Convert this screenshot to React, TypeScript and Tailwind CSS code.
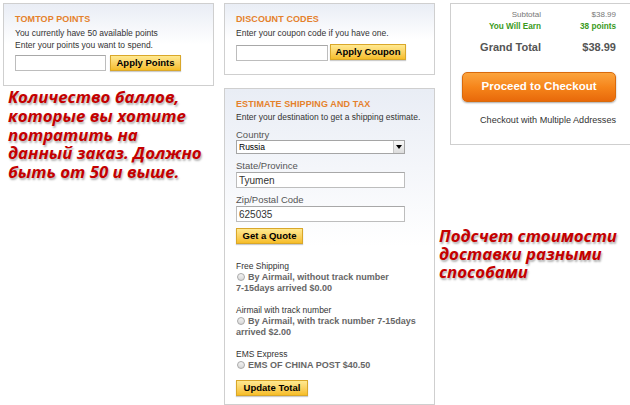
import React from "react";

const panel =
  "border border-[#cfcfcf] bg-gradient-to-b from-[#e9edf5] via-white to-white";
const title = "text-[9px] leading-[12px] font-bold text-[#e5812c] tracking-[0.1px]";
const body = "text-[8.5px] leading-[12px] text-[#333] whitespace-nowrap";
const yellowBtn =
  "h-[16px] flex items-center justify-center border border-[#d9a72a] bg-gradient-to-b from-[#ffe98f] to-[#f6bd22] text-[9.5px] font-bold text-black shadow-[0_1px_1px_rgba(0,0,0,0.2)] whitespace-nowrap";
const input = "h-[16px] border border-[#bdbdbd] border-t-[#a8a8a8] bg-white";
const red =
  "text-[#c40000] font-bold italic text-[16.8px] leading-[18.8px] whitespace-nowrap [text-shadow:1px_2px_2px_rgba(0,0,0,0.3)]";
const label = "text-[9.5px] leading-[11px] text-[#555]";
const optText = "text-[9px] leading-[11px] font-bold text-[#666] whitespace-nowrap";

function Radio() {
  return (
    <span className="inline-block w-[8px] h-[8px] rounded-full border border-[#a9a9a9] bg-gradient-to-b from-[#f3f3f3] to-[#d8d8d8] align-[-1px] mr-[3px] ml-[1px]" />
  );
}

export default function App() {
  return (
    <div
      className="w-[630px] h-[405px] overflow-hidden bg-white flex"
      style={{ fontFamily: '"Liberation Sans", Arial, sans-serif' }}
    >
      {/* Column 1 */}
      <div className="ml-[3px] mt-[3px] w-[211px] shrink-0 flex flex-col">
        <div className={`${panel} pt-[9px] pb-[14px] pl-[11px]`}>
          <div className={title}>TOMTOP POINTS</div>
          <div className={`${body} mt-[2px]`}>
            You currently have 50 available points
          </div>
          <div className={body}>Enter your points you want to spend.</div>
          <div className="mt-[4px] flex items-center gap-[4px]">
            <div className={`${input} w-[91px]`} />
            <div className={`${yellowBtn} w-[71px]`}>Apply Points</div>
          </div>
        </div>
        <div
          className={`${red} mt-[2px] ml-[5px]`}
          style={{ fontFamily: '"Open Sans", sans-serif' }}
        >
          Количество баллов,
          <br />
          которые вы хотите
          <br />
          потратить на
          <br />
          данный заказ. Должно
          <br />
          быть от 50 и выше.
        </div>
      </div>

      {/* Column 2 */}
      <div className="ml-[10px] mt-[3px] w-[211px] shrink-0 flex flex-col">
        <div className={`${panel} pt-[9px] pb-[13px] pl-[11px]`}>
          <div className={title}>DISCOUNT CODES</div>
          <div className={`${body} mt-[2px]`}>
            Enter your coupon code if you have one.
          </div>
          <div className="mt-[6px] flex items-center gap-[2px]">
            <div className={`${input} w-[92px]`} />
            <div className={`${yellowBtn} w-[76px] -mt-[2px]`}>Apply Coupon</div>
          </div>
        </div>

        <div className={`${panel} mt-[13px] pt-[9px] pb-[8px] pl-[11px]`}>
          <div className={title}>ESTIMATE SHIPPING AND TAX</div>
          <div className={`${body} mt-[1px]`}>
            Enter your destination to get a shipping estimate.
          </div>
          <div className={`${label} mt-[6px]`}>Country</div>
          <div className="w-[169px] h-[14px] border border-[#a5a5a5] bg-white flex items-center justify-between">
            <span className="text-[8.5px] text-black pl-[2px]">Russia</span>
            <span className="w-[11px] h-[12px] border-l border-[#c8c8c8] bg-gradient-to-b from-[#fafafa] to-[#dcdcdc] flex items-center justify-center">
              <span className="w-0 h-0 border-l-[3px] border-r-[3px] border-t-[4px] border-l-transparent border-r-transparent border-t-black" />
            </span>
          </div>
          <div className={`${label} mt-[6px]`}>State/Province</div>
          <div className={`${input} w-[169px] mt-[1px] flex items-center text-[10px] text-[#333] pl-[2px]`}>
            Tyumen
          </div>
          <div className={`${label} mt-[6px]`}>Zip/Postal Code</div>
          <div className={`${input} w-[169px] mt-[1px] flex items-center text-[10px] text-[#333] pl-[2px]`}>
            625035
          </div>
          <div className={`${yellowBtn} w-[67px] mt-[6px]`}>Get a Quote</div>

          <div className={`${body} leading-[11px] mt-[16px]`}>Free Shipping</div>
          <div className={optText}>
            <Radio />
            By Airmail, without track number
            <br />
            7-15days arrived $0.00
          </div>

          <div className={`${body} leading-[11px] mt-[10px]`}>
            Airmail with track number
          </div>
          <div className={optText}>
            <Radio />
            By Airmail, with track number 7-15days
            <br />
            arrived $2.00
          </div>

          <div className={`${body} leading-[11px] mt-[10px]`}>EMS Express</div>
          <div className={optText}>
            <Radio />
            EMS OF CHINA POST $40.50
          </div>

          <div className={`${yellowBtn} w-[72px] mt-[9px]`}>Update Total</div>
        </div>
      </div>

      {/* Column 3 */}
      <div className="ml-[4px] mt-[3px] w-[200px] shrink-0 flex flex-col">
        <div className="ml-[11px] w-[190px] border border-[#cfcfcf] bg-white pt-[5px] pb-[18px] pl-[11px]">
          <div className="grid grid-cols-[79px_75px] text-right">
            <div className="text-[8px] leading-[12px] text-[#777]">Subtotal</div>
            <div className="text-[8px] leading-[12px] text-[#777]">$38.99</div>
            <div className="text-[8.2px] leading-[12px] font-bold text-[#3a9a1c]">
              You Will Earn
            </div>
            <div className="text-[8.2px] leading-[12px] font-bold text-[#3a9a1c]">
              38 points
            </div>
            <div className="mt-[7px] text-[11px] leading-[14px] font-bold text-[#555]">
              Grand Total
            </div>
            <div className="mt-[7px] text-[11px] leading-[14px] font-bold text-[#555]">
              $38.99
            </div>
          </div>
          <div className="mt-[18px] w-[154px] h-[30px] rounded-[5px] border border-[#d96a0c] bg-gradient-to-b from-[#fba43c] via-[#f6851a] to-[#e8690a] shadow-[0_1px_2px_rgba(0,0,0,0.35)] flex items-center justify-center text-white font-bold text-[11.5px]">
            Proceed to Checkout
          </div>
          <div className="mt-[12px] w-[154px] text-right text-[9.1px] leading-[12px] text-[#333] whitespace-nowrap">
            Checkout with Multiple Addresses
          </div>
        </div>
        <div
          className={`${red} mt-[82px] leading-[18px]`}
          style={{ fontFamily: '"Open Sans", sans-serif' }}
        >
          Подсчет стоимости
          <br />
          доставки разными
          <br />
          способами
        </div>
      </div>
    </div>
  );
}
